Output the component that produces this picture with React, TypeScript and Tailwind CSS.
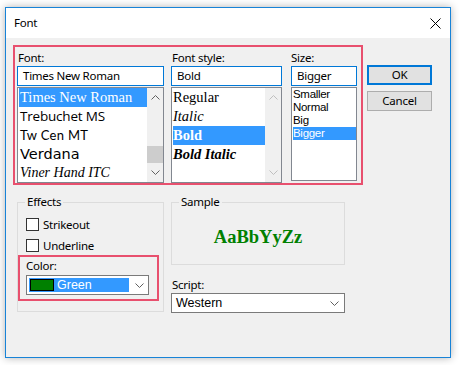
const Chevron = ({ up, light }: { up?: boolean; light?: boolean }) => (
	<svg width="9" height="5" viewBox="0 0 9 5" className={light ? 'stroke-[#bfbfbf]' : 'stroke-[#606060]'}>
		<polyline
			points={up ? '0.5,4.5 4.5,0.5 8.5,4.5' : '0.5,0.5 4.5,4.5 8.5,0.5'}
			fill="none"
			strokeWidth="1"
		/>
	</svg>
);

const ui = "font-['Segoe_UI','Noto_Sans',sans-serif] text-[11.5px] tracking-[-0.25px] text-black";

const Input = ({ value, width }: { value: string; width: string }) => (
	<div className={`${width} h-[20px] border border-[#0078d7] bg-white flex items-center pl-[5px] ${ui}`}>
		{value}
	</div>
);

const Scrollbar = ({ light, thumb }: { light?: boolean; thumb?: boolean }) => (
	<div className="w-[16px] bg-[#f0f0f0] flex flex-col items-center justify-between py-[7px] relative">
		<Chevron up light={light} />
		{thumb && <div className="absolute left-0 right-0 top-[58px] h-[17px] bg-[#cdcdcd]" />}
		<Chevron light={light} />
	</div>
);

export default function App() {
	return (
		<div className="w-[459px] h-[365px] bg-white relative overflow-hidden">
			<div className="absolute left-[5px] top-[7px] w-[446px] h-[351px] border border-[#1883d7] bg-[#f0f0f0] shadow-[0_0_8px_rgba(0,0,0,0.3)] flex flex-col">
				{/* title bar */}
				<div className="h-[30px] bg-white flex items-center justify-between pl-[8px] pr-[9px]">
					<span className={ui}>Font</span>
					<svg width="11" height="11" viewBox="0 0 11 11" className="stroke-black">
						<path d="M0.5 0.5L10.5 10.5M10.5 0.5L0.5 10.5" strokeWidth="1" />
					</svg>
				</div>

				{/* body */}
				<div className="flex flex-col">
					<div className="flex mt-[7px] ml-[7px]">
						<div className="w-[350px] h-[140px] border-2 border-[#e8506e] flex pl-[2px] pt-[2px]">
							{/* Font column */}
							<div className="w-[147px] flex flex-col">
								<div className={`h-[17px] leading-[17px] pl-px ${ui}`}>Font:</div>
								<Input value="Times New Roman" width="w-[147px]" />
								<div className="mt-px h-[97px] border border-[#828790] bg-white flex overflow-hidden">
									<div className="flex-1 pl-px flex flex-col">
										<div className="h-[19px] leading-[19px] bg-[#3399ff] text-white pl-px font-['Liberation_Serif',serif] text-[14.5px]">
											Times New Roman
										</div>
										<div className="h-[19px] leading-[19px] pl-px font-['Open_Sans',sans-serif] text-[13.5px] tracking-[-0.2px]">
											Trebuchet MS
										</div>
										<div className="h-[19px] leading-[19px] pl-px font-['Lato',sans-serif] text-[13px] tracking-[0.3px]">
											Tw Cen MT
										</div>
										<div className="h-[19px] leading-[19px] pl-px font-['DejaVu_Sans',sans-serif] text-[14.5px]">
											Verdana
										</div>
										<div className="h-[19px] leading-[17px] pl-px font-['Liberation_Serif',serif] italic text-[14px]">
											Viner Hand ITC
										</div>
									</div>
									<Scrollbar thumb />
								</div>
							</div>

							{/* Font style column */}
							<div className="w-[111px] flex flex-col ml-[7px]">
								<div className={`h-[17px] leading-[17px] pl-px ${ui}`}>Font style:</div>
								<Input value="Bold" width="w-[111px]" />
								<div className="mt-px h-[97px] border border-[#828790] bg-white flex overflow-hidden">
									<div className="flex-1 pl-px flex flex-col font-['Liberation_Serif',serif] text-[14.5px]">
										<div className="h-[19px] leading-[19px]">Regular</div>
										<div className="h-[19px] leading-[19px] italic">Italic</div>
										<div className="h-[19px] leading-[19px] font-bold bg-[#3399ff] text-white">Bold</div>
										<div className="h-[19px] leading-[19px] font-bold italic">Bold Italic</div>
									</div>
									<Scrollbar light />
								</div>
							</div>

							{/* Size column */}
							<div className="w-[66px] flex flex-col ml-[9px]">
								<div className={`h-[17px] leading-[17px] ${ui}`}>Size:</div>
								<Input value="Bigger" width="w-[66px]" />
								<div className="mt-px h-[94px] border border-[#828790] bg-white flex flex-col pl-px font-['Liberation_Sans',sans-serif] text-[11.5px] tracking-[-0.3px]">
									<div className="h-[13px] leading-[13px]">Smaller</div>
									<div className="h-[13px] leading-[13px]">Normal</div>
									<div className="h-[13px] leading-[13px]">Big</div>
									<div className="h-[13px] leading-[13px] bg-[#3399ff] text-white">Bigger</div>
								</div>
							</div>
						</div>

						{/* buttons */}
						<div className="flex flex-col ml-[4px] mt-[20px] gap-[6px]">
							<div className={`w-[65px] h-[20px] border-2 border-[#0078d7] bg-[#e1e1e1] flex items-center justify-center ${ui}`}>
								OK
							</div>
							<div className={`w-[65px] h-[20px] border border-[#adadad] bg-[#e1e1e1] flex items-center justify-center ${ui}`}>
								Cancel
							</div>
						</div>
					</div>

					<div className="flex mt-[17px] ml-[11px]">
						{/* Effects */}
						<div className="w-[147px] h-[110px] border border-[#dcdcdc] relative flex flex-col">
							<span className={`absolute left-[7px] -top-[9px] px-[2px] bg-[#f0f0f0] leading-[16px] ${ui}`}>Effects</span>
							<div className="flex items-center mt-[15px] ml-[8px] h-[13px]">
								<div className="w-[13px] h-[13px] border border-[#333333] bg-white" />
								<span className={`ml-[4px] ${ui}`}>Strikeout</span>
							</div>
							<div className="flex items-center mt-[8px] ml-[8px] h-[13px]">
								<div className="w-[13px] h-[13px] border border-[#333333] bg-white" />
								<span className={`ml-[4px] ${ui}`}>Underline</span>
							</div>
							<div className="mt-[3px] w-[141px] h-[46px] border-2 border-[#e8506e] flex flex-col pl-[6px]">
								<div className={`h-[18px] leading-[18px] ${ui}`}>Color:</div>
								<div className="w-[123px] h-[20px] border border-[#7a7a7a] bg-white flex items-center pl-[2px]">
									<div className="w-[100px] h-[14px] bg-[#3399ff] flex items-center pl-px">
										<div className="w-[24px] h-[12px] bg-[#008000] border border-black" />
										<span className="ml-[3px] font-['Liberation_Sans',sans-serif] text-[12.5px] text-white">Green</span>
									</div>
									<div className="flex-1 flex justify-center pl-[2px]">
										<Chevron />
									</div>
								</div>
							</div>
						</div>

						<div className="flex flex-col ml-[7px]">
							{/* Sample */}
							<div className="w-[174px] h-[63px] border border-[#dcdcdc] relative flex items-center justify-center">
								<span className={`absolute left-[7px] -top-[9px] px-[2px] bg-[#f0f0f0] leading-[16px] ${ui}`}>Sample</span>
								<span className="mt-[9px] font-['Liberation_Serif',serif] font-bold text-[18.5px] text-[#008000]">
									AaBbYyZz
								</span>
							</div>
							<div className={`mt-[11px] h-[17px] leading-[17px] pl-px ${ui}`}>Script:</div>
							<div className="w-[174px] h-[20px] border border-[#7a7a7a] bg-white flex items-center justify-between pl-[4px] pr-[5px]">
								<span className="font-['Liberation_Sans',sans-serif] text-[12.5px]">Western</span>
								<Chevron />
							</div>
						</div>
					</div>
				</div>
			</div>
		</div>
	);
}
